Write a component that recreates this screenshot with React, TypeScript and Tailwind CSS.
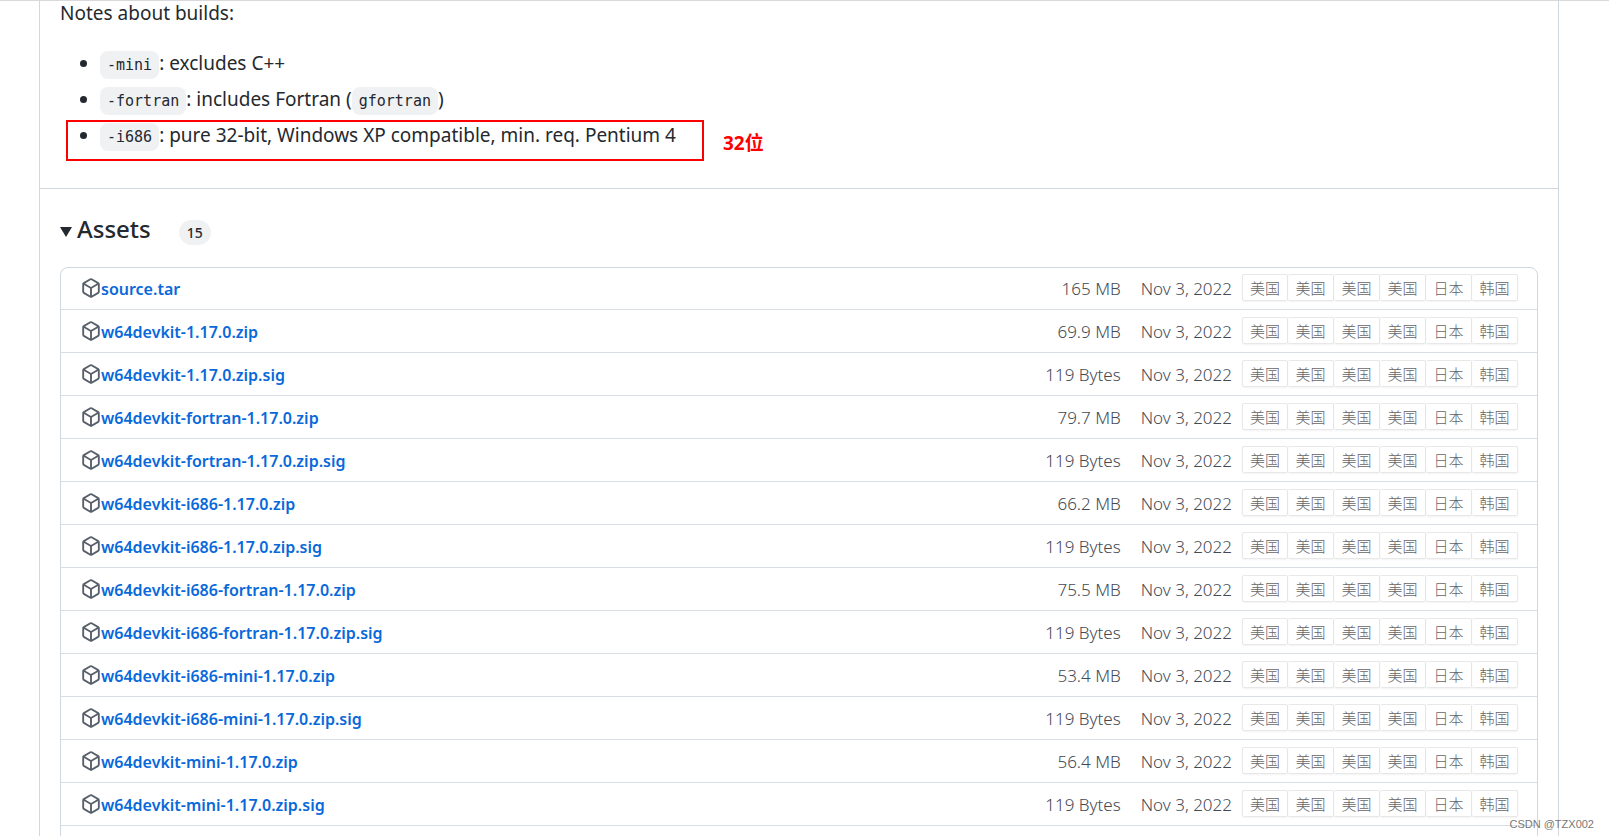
import type { ReactNode } from "react";

type Asset = { name: string; size: string };

const assets: Asset[] = [
  { name: "source.tar", size: "165 MB" },
  { name: "w64devkit-1.17.0.zip", size: "69.9 MB" },
  { name: "w64devkit-1.17.0.zip.sig", size: "119 Bytes" },
  { name: "w64devkit-fortran-1.17.0.zip", size: "79.7 MB" },
  { name: "w64devkit-fortran-1.17.0.zip.sig", size: "119 Bytes" },
  { name: "w64devkit-i686-1.17.0.zip", size: "66.2 MB" },
  { name: "w64devkit-i686-1.17.0.zip.sig", size: "119 Bytes" },
  { name: "w64devkit-i686-fortran-1.17.0.zip", size: "75.5 MB" },
  { name: "w64devkit-i686-fortran-1.17.0.zip.sig", size: "119 Bytes" },
  { name: "w64devkit-i686-mini-1.17.0.zip", size: "53.4 MB" },
  { name: "w64devkit-i686-mini-1.17.0.zip.sig", size: "119 Bytes" },
  { name: "w64devkit-mini-1.17.0.zip", size: "56.4 MB" },
  { name: "w64devkit-mini-1.17.0.zip.sig", size: "119 Bytes" },
];

const mirrors = ["美国", "美国", "美国", "美国", "日本", "韩国"];

function PackageIcon() {
  return (
    <svg viewBox="0 0 16 16" aria-hidden="true" className="size-5 shrink-0 fill-[#57606a]">
      <path d="m8.878.392 5.25 3.045c.54.314.872.89.872 1.514v6.098a1.75 1.75 0 0 1-.872 1.514l-5.25 3.045a1.75 1.75 0 0 1-1.756 0l-5.25-3.045A1.75 1.75 0 0 1 1 11.049V4.951c0-.624.332-1.201.872-1.514L7.122.392a1.75 1.75 0 0 1 1.756 0ZM7.875 1.69l-4.63 2.685L8 7.133l4.755-2.758-4.63-2.685a.248.248 0 0 0-.25 0ZM2.5 5.677v5.372c0 .09.047.171.125.216l4.625 2.683V8.432Zm6.25 8.271 4.625-2.683a.25.25 0 0 0 .125-.216V5.677L8.75 8.432Z" />
    </svg>
  );
}

function Code({ children }: { children: ReactNode }) {
  return (
    <code className="rounded-lg bg-[#eff1f3] px-[7px] py-[5px] font-['DejaVu_Sans_Mono',monospace] text-[15px] leading-none">
      {children}
    </code>
  );
}

function AssetRow({ name, size }: Asset) {
  return (
    <li className="flex items-center border-b border-[#d8dee4] pt-[7px] pr-[19px] pb-2 pl-5 leading-6 first:pt-1.5">
      <PackageIcon />
      <a href="#" className="mt-0.5 text-base leading-6 font-semibold text-[#0969da]">
        {name}
      </a>
      <span className="mt-0.5 ml-auto font-light text-[#434a53]">{size}</span>
      <span className="mt-0.5 ml-5 font-light text-[#434a53]">Nov 3, 2022</span>
      <div className="ml-2.5 flex">
        {mirrors.map((mirror, i) => (
          <a
            key={i}
            href="#"
            className="box-content flex h-[25px] w-[45px] items-center justify-center rounded-xs border border-l-0 border-[#e8e8e8] text-[15px] font-light text-[#666] shadow-xs first:w-[44px] first:border-l"
          >
            {mirror}
          </a>
        ))}
      </div>
    </li>
  );
}

export default function App() {
  return (
    <div className="relative h-screen overflow-hidden border-t border-[#d9d9dc] bg-white font-['Noto_Sans','Noto_Sans_CJK_SC',sans-serif] text-[#24292f]">
      <main className="mr-[50px] ml-[39px] flex h-full flex-col border-x border-[#d0d7de]">
        <section className="border-b border-[#d0d7de] px-5 pb-[38px] text-[19px] leading-[30px]">
          <p className="-mt-[3px] mb-5">Notes about builds:</p>
          <ul className="ml-10 flex list-disc flex-col gap-1.5">
            <li>
              <Code>-mini</Code>: excludes C++
            </li>
            <li>
              <Code>-fortran</Code>: includes Fortran (<Code>gfortran</Code>)
            </li>
            <li className="relative">
              <Code>-i686</Code>: pure 32-bit, Windows XP compatible, min. req. Pentium 4
              <span className="absolute top-0 -left-[34px] h-[41px] w-[638px] border-2 border-[#ff0000]" />
              <strong className="absolute top-2 left-[623px] font-bold text-[#ff0000]">
                32位
              </strong>
            </li>
          </ul>
        </section>
        <details open className="flex-1 px-5">
          <summary className="flex h-[78px] cursor-pointer items-center">
            <svg viewBox="0 0 12 10" aria-hidden="true" className="mt-2 mr-[5px] h-2.5 w-3 fill-[#24292f]">
              <path d="M0 0H12L6 10Z" />
            </svg>
            <h3 className="mt-0.5 text-2xl font-medium">Assets</h3>
            <span className="mt-2 ml-7 rounded-full bg-[#eff1f3] px-2 text-sm leading-[25px] font-medium">
              15
            </span>
          </summary>
          <ul className="h-screen rounded-lg border border-[#d0d7de] text-[17px]">
            {assets.map((asset) => (
              <AssetRow key={asset.name} {...asset} />
            ))}
          </ul>
        </details>
      </main>
      <span className="absolute right-[15px] bottom-1 font-['Liberation_Sans',sans-serif] text-[11px] text-[#777]">
        CSDN @TZX002
      </span>
    </div>
  );
}
